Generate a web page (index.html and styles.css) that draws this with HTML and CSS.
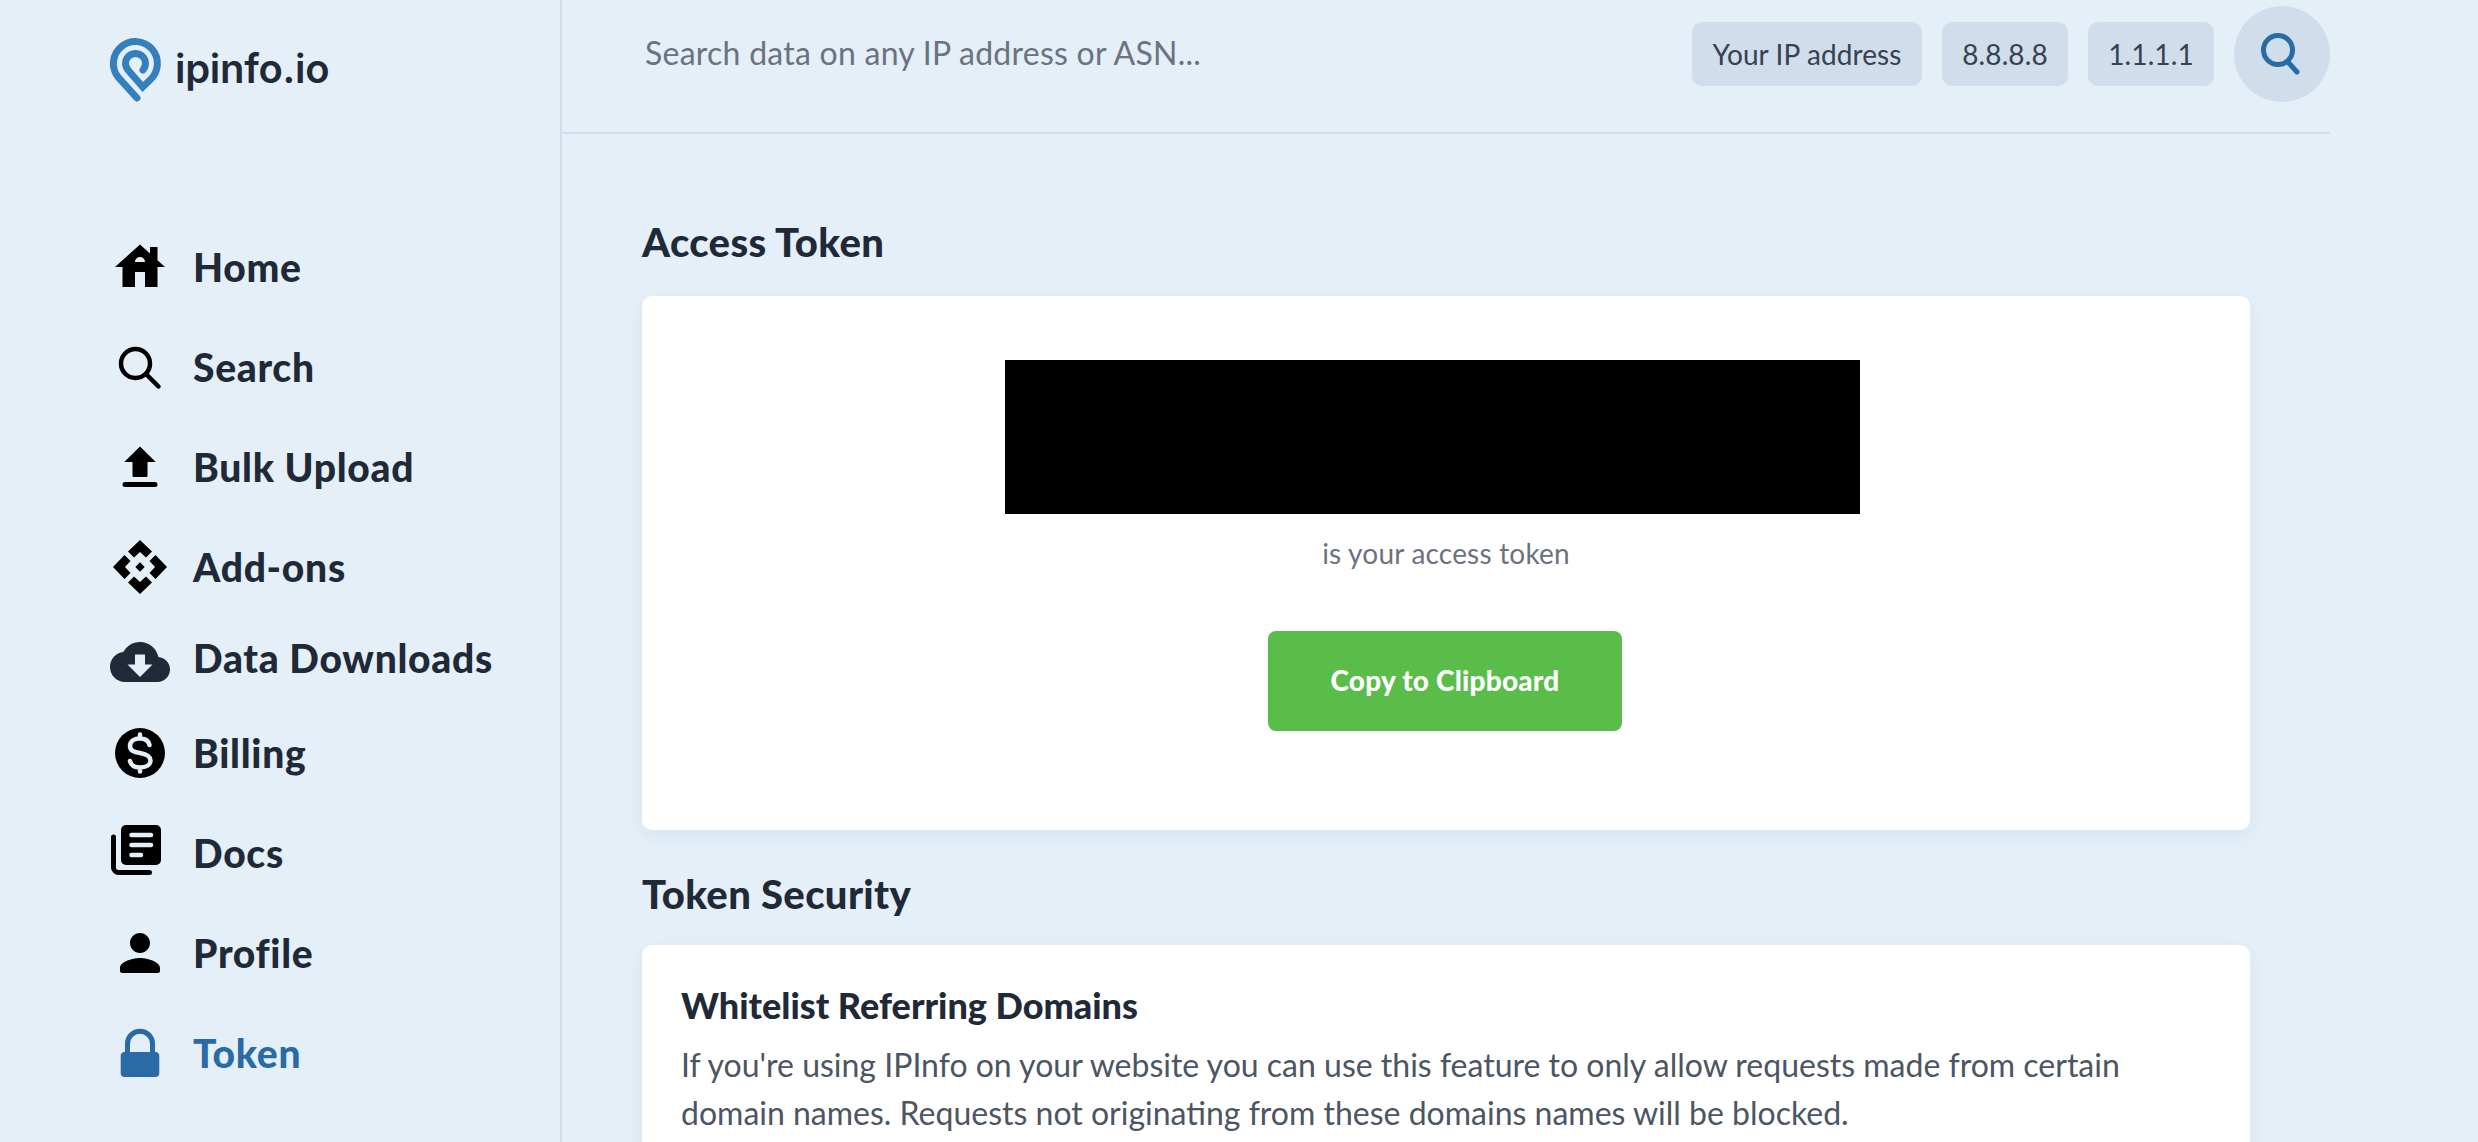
FILE: index.html
```html
<!DOCTYPE html>
<html lang="en">

<head>
  <meta charset="UTF-8" />
  <title>ipinfo.io - Access Token</title>
  <link rel="stylesheet" href="styles.css">
</head>

<body>

  <aside class="sidebar">
    <a class="logo" href="#">
      <svg class="logo-mark" viewBox="0 0 60 80" fill="none">
        <path d="M31 68 L12 47 A22 22 0 1 1 44 50 L36.700 57 L22 40 A10 10 0 1 1 37 40" />
      </svg>
      <span class="logo-text">ipinfo.io</span>
    </a>

    <nav class="nav">
      <a class="nav-item" href="#">
        <svg class="icon" viewBox="0 0 24 24"><path d="M19 9.300V4h-3v2.600L12 3 2 12h3v8h5v-6h4v6h5v-8h3l-3-2.700zm-9 .700c0-1.100.9-2 2-2s2 .9 2 2h-4z" /></svg>
        <span>Home</span>
      </a>
      <a class="nav-item" href="#">
        <svg class="icon" viewBox="0 0 60 60" fill="none" stroke="#000" stroke-width="4.500" stroke-linecap="round"><circle cx="25.500" cy="26.500" r="14.500" /><path d="M36 37 L48.500 49.500" /></svg>
        <span>Search</span>
      </a>
      <a class="nav-item" href="#">
        <svg class="icon" viewBox="0 0 24 24"><path d="M9.500 16h5a.5.5 0 00.5-.5V10h3.300L12 3.800 5.700 10H9v5.500a.5.5 0 00.500.500zM6 18h12a1 1 0 010 2H6a1 1 0 010-2z" /></svg>
        <span>Bulk Upload</span>
      </a>
      <a class="nav-item" href="#">
        <svg class="icon" viewBox="-30 -30 60 60">
          <path id="piece" d="M0 -27 L12 -15.500 L6 -9.500 L0 -15 L-6 -9.500 L-12 -15.500 Z" />
          <use href="#piece" transform="rotate(90)" />
          <use href="#piece" transform="rotate(180)" />
          <use href="#piece" transform="rotate(270)" />
          <path d="M0 -4.700 L4.700 0 L0 4.700 L-4.700 0 Z" />
        </svg>
        <span>Add-ons</span>
      </a>
      <a class="nav-item nav-item-short" href="#">
        <svg class="icon icon-cloud" viewBox="0 0 24 24"><path d="M19.350 10.040C18.670 6.590 15.640 4 12 4 9.110 4 6.600 5.640 5.350 8.040 2.340 8.360 0 10.910 0 14c0 3.310 2.690 6 6 6h13c2.760 0 5-2.240 5-5 0-2.640-2.050-4.780-4.650-4.960zM17 13l-5 5-5-5h3V9h4v4h3z" /></svg>
        <span class="label-up">Data Downloads</span>
      </a>
      <a class="nav-item" href="#">
        <svg class="icon" viewBox="0 0 60 60">
          <circle cx="30" cy="30" r="25" />
          <path d="M39.500 22 C38.500 17.500 34.500 15.500 30 15.500 C24.500 15.500 20 18 20 23 C20 28 24.500 29 30 30 C35.500 31 40.500 32.500 40.500 37.500 C40.500 42 36 44.500 30 44.500 C25 44.500 21 42.500 20 38 M30 11.500 V15.500 M30 44.500 V48.500" fill="none" stroke="#e4eff8" stroke-width="4.500" stroke-linecap="round" />
        </svg>
        <span>Billing</span>
      </a>
      <a class="nav-item" href="#">
        <svg class="icon" viewBox="0 0 60 60">
          <path d="M3.500 14 V44.500 a5 5 0 0 0 5 5 H39.500" fill="none" stroke="#000" stroke-width="5" stroke-linecap="round" />
          <rect x="11" y="2" width="40" height="40" rx="5" />
          <path d="M21.500 12 H41 M21.500 22 H41 M21.500 32 H31" stroke="#e4eff8" stroke-width="4.500" stroke-linecap="round" />
        </svg>
        <span>Docs</span>
      </a>
      <a class="nav-item" href="#">
        <svg class="icon" viewBox="0 0 24 24"><path d="M12 12c2.210 0 4-1.790 4-4s-1.790-4-4-4-4 1.790-4 4 1.790 4 4 4zm0 2c-2.670 0-8 1.340-8 4v1a1 1 0 001 1h14a1 1 0 001-1v-1c0-2.660-5.330-4-8-4z" /></svg>
        <span>Profile</span>
      </a>
      <a class="nav-item active" href="#">
        <svg class="icon" viewBox="0 0 60 60">
          <path d="M17.500 31 V20.700 a12.500 12.500 0 0 1 25 0 V31" fill="none" stroke="#2a6aa5" stroke-width="5" />
          <rect x="10.700" y="29" width="38.600" height="25" rx="4" fill="#2a6aa5" />
        </svg>
        <span>Token</span>
      </a>
    </nav>
  </aside>

  <div class="main">
    <header class="topbar">
      <div class="search-text">Search data on any IP address or ASN...</div>
      <div class="quick">
        <a class="pill pill-wide" href="#">Your IP address</a>
        <a class="pill" href="#">8.8.8.8</a>
        <a class="pill" href="#">1.1.1.1</a>
        <button class="search-btn">
          <svg viewBox="0 0 60 60" fill="none" stroke="#2a6aa5" stroke-width="5" stroke-linecap="round"><circle cx="26" cy="26" r="14.500" /><path d="M36 38 L45 48" /></svg>
        </button>
      </div>
    </header>

    <div class="content">
      <h2 class="section-title">Access Token</h2>
      <section class="card token-card">
        <div class="token-value"></div>
        <p class="token-caption">is your access token</p>
        <button class="copy-btn">Copy to Clipboard</button>
      </section>

      <h2 class="section-title section-title-second">Token Security</h2>
      <section class="card security-card">
        <h3>Whitelist Referring Domains</h3>
        <p>If you're using IPInfo on your website you can use this feature to only allow requests made from certain domain names. Requests not originating from these domains names will be blocked.</p>
      </section>
    </div>
  </div>

</body>
</html>
```

FILE: styles.css
```css
:root {
  --bg: #e4eff8;
  --line: #cfdeea;
  --dark: #1f2937;
  --blue: #2a6aa5;
  --green: #5abd4a;
}

* {
  margin: 0;
  padding: 0;
  box-sizing: border-box;
  font-family: "Lato", "Open Sans", sans-serif;
}

body {
  background-color: var(--bg);
  height: 100vh;
  overflow: hidden;
  display: flex;
  color: var(--dark);
}

a {
  color: inherit;
  text-decoration: none;
}

/* Sidebar */

.sidebar {
  width: 562px;
  flex-shrink: 0;
  border-right: 2px solid var(--line);
  padding-left: 106px;
}

.logo {
  display: flex;
  align-items: center;
  height: 136px;
  gap: 9px;
}

.logo-mark {
  width: 60px;
  height: 80px;
  stroke: #347fbd;
  stroke-width: 7;
  stroke-linecap: round;
  margin-top: 4px;
}

.logo-text {
  font-family: "Inter", sans-serif;
  font-size: 40px;
  font-weight: 600;
  letter-spacing: -0.3px;
}

.nav {
  margin-top: 81px;
  display: flex;
  flex-direction: column;
}

.nav-item {
  display: flex;
  align-items: center;
  gap: 23px;
  height: 100px;
  padding-left: 4px;
  font-size: 39px;
  font-weight: 900;
  letter-spacing: 0.7px;
}

.nav-item-short {
  height: 86px;
}

.nav-item .icon {
  width: 60px;
  height: 60px;
  flex-shrink: 0;
}

.icon-cloud {
  fill: var(--dark);
  margin-top: 4px;
}

.label-up {
  margin-bottom: 4px;
}

.nav-item.active {
  color: var(--blue);
}

/* Top bar */

.main {
  width: 1768px;
  height: 100vh;
  overflow: hidden;
  flex-shrink: 0;
}

.topbar {
  height: 134px;
  display: flex;
  justify-content: space-between;
  padding-left: 83px;
  border-bottom: 2px solid var(--line);
}

.search-text {
  font-size: 32px;
  line-height: 106px;
  letter-spacing: 0.25px;
  color: #6b7280;
}

.quick {
  display: flex;
  align-items: flex-start;
  gap: 20px;
  padding-top: 6px;
}

.pill {
  width: 126px;
  height: 64px;
  margin-top: 16px;
  background: var(--line);
  border-radius: 10px;
  display: flex;
  align-items: center;
  justify-content: center;
  font-size: 28px;
  letter-spacing: 0.1px;
  color: #374151;
}

.pill-wide {
  width: 230px;
}

.search-btn {
  width: 96px;
  height: 96px;
  border: none;
  border-radius: 50%;
  background: var(--line);
  display: flex;
  align-items: center;
  justify-content: center;
}

.search-btn svg {
  width: 60px;
  height: 60px;
}

/* Content */

.content {
  padding: 0 80px;
}

.section-title {
  font-size: 40px;
  font-weight: 900;
  letter-spacing: 0.35px;
  line-height: 54px;
  margin-top: 81px;
  margin-bottom: 27px;
}

.section-title-second {
  margin-top: 37px;
  margin-bottom: 24px;
}

.card {
  background: #ffffff;
  border-radius: 10px;
  box-shadow: 0 6px 20px rgba(30, 60, 90, 0.06);
}

.token-card {
  height: 534px;
  padding-top: 64px;
  display: flex;
  flex-direction: column;
  align-items: center;
}

.token-value {
  width: 855px;
  height: 154px;
  margin-right: 28px;
  background: #000000;
}

.token-caption {
  margin-top: 20px;
  line-height: 38px;
  font-size: 28px;
  letter-spacing: 0.2px;
  color: #6b7280;
}

.copy-btn {
  width: 354px;
  height: 100px;
  margin-top: 59px;
  margin-right: 2px;
  padding-bottom: 2px;
  border: none;
  border-radius: 8px;
  background: var(--green);
  color: #ffffff;
  font-size: 28px;
  font-weight: 900;
  letter-spacing: 0.2px;
}

.security-card {
  padding: 35px 39px;
  height: 400px;
}

.security-card h3 {
  font-size: 36px;
  font-weight: 900;
  line-height: 50px;
}

.security-card p {
  margin-top: 11px;
  font-size: 32px;
  line-height: 48px;
  color: #4b5563;
}
```
